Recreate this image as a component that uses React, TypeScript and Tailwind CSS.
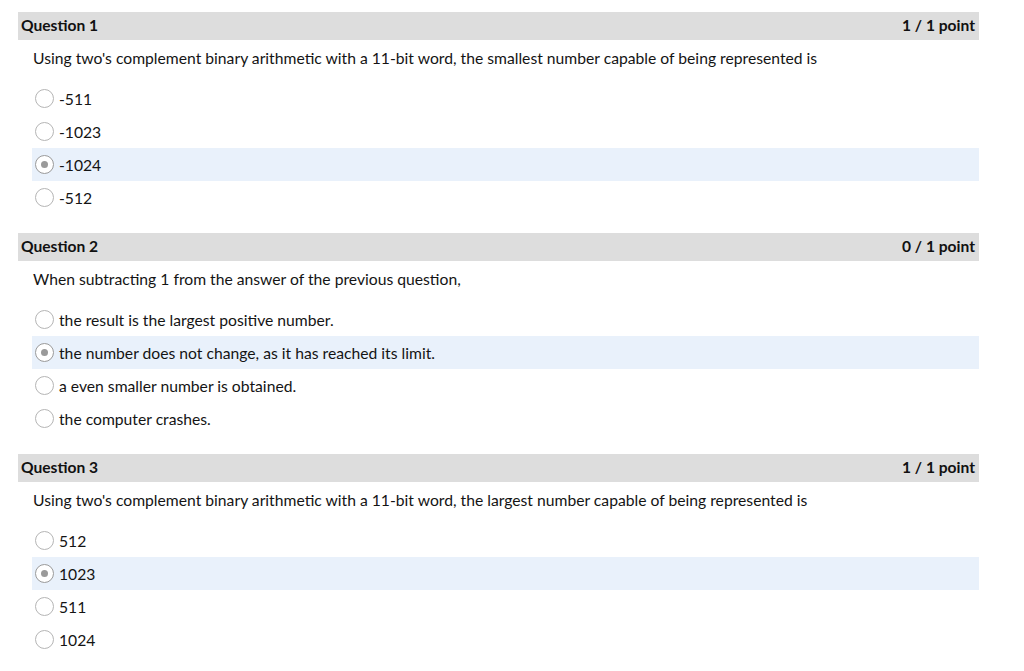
import React from "react";

type Q = { title: string; points: string; text: string; options: string[]; selected: number };

const questions: Q[] = [
  {
    title: "Question 1",
    points: "1 / 1 point",
    text: "Using two's complement binary arithmetic with a 11-bit word, the smallest number capable of being represented is",
    options: ["-511", "-1023", "-1024", "-512"],
    selected: 2,
  },
  {
    title: "Question 2",
    points: "0 / 1 point",
    text: "When subtracting 1 from the answer of the previous question,",
    options: [
      "the result is the largest positive number.",
      "the number does not change, as it has reached its limit.",
      "a even smaller number is obtained.",
      "the computer crashes.",
    ],
    selected: 1,
  },
  {
    title: "Question 3",
    points: "1 / 1 point",
    text: "Using two's complement binary arithmetic with a 11-bit word, the largest number capable of being represented is",
    options: ["512", "1023", "511", "1024"],
    selected: 1,
  },
];

function Radio({ checked }: { checked: boolean }) {
  return (
    <span
      className={
        "flex h-[19px] w-[19px] shrink-0 items-center justify-center rounded-full border bg-white " +
        (checked ? "border-[#9a9a9a]" : "border-[#b5b5b5]")
      }
    >
      {checked && <span className="h-[7px] w-[7px] rounded-full bg-[#9a9a9a]" />}
    </span>
  );
}

export default function App() {
  return (
    <div
      className="min-h-[671px] w-[1024px] bg-white pt-[12px] text-[#141414]"
      style={{ fontFamily: "Lato, 'Noto Sans', sans-serif" }}
    >
      <div className="ml-[18px] w-[961px]">
        {questions.map((q, qi) => (
          <div key={qi} className="mb-[19px]">
            <div className="flex h-[28px] items-center justify-between bg-[#dddddd] pl-[3px] pr-[4px] text-[15.6px] font-bold text-[#111]">
              <span className="-mt-[1px]">{q.title}</span>
              <span className="-mt-[1px]">{q.points}</span>
            </div>
            <div className="ml-[15px] mt-[8px] h-[20px] text-[15.7px] leading-[20px]">{q.text}</div>
            <div className="ml-[14px] mt-[14px]">
              {q.options.map((o, oi) => (
                <div
                  key={oi}
                  className={
                    "flex h-[33px] items-center gap-[5px] pl-[3px] text-[15.7px] " +
                    (oi === q.selected ? "bg-[#e9f1fb]" : "")
                  }
                >
                  <Radio checked={oi === q.selected} />
                  <span className="mt-[3px]">{o}</span>
                </div>
              ))}
            </div>
          </div>
        ))}
      </div>
    </div>
  );
}
